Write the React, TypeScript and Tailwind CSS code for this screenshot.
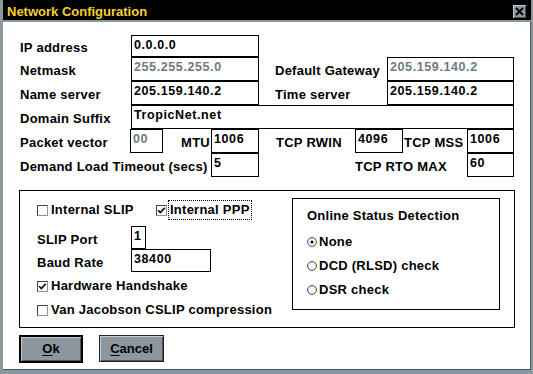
import React from 'react'

interface BoxProps {
  children?: React.ReactNode
  className?: string
  dim?: boolean
}

// Win3.x style edit field — sharp black outline, bold text pinned to the top
function Box({ children, className = '', dim = false }: BoxProps) {
  return (
    <div
      className={`shrink-0 border border-black bg-white pl-[2px] pt-[2px] text-[12.5px] leading-[15px] tracking-[0.6px] ${dim ? 'text-[#6e7a84]' : 'text-black'} ${className}`}
    >
      {children}
    </div>
  )
}

function Label({ children, className = '' }: { children: React.ReactNode; className?: string }) {
  return <span className={`shrink-0 pt-[4px] text-[13px] leading-4 tracking-[0.25px] ${className}`}>{children}</span>
}

function CheckBox({ checked = false }: { checked?: boolean }) {
  return (
    <span className="flex h-[11px] w-[11px] shrink-0 items-center justify-center border-t border-l border-[#404448] border-r-[#8c9498] border-b-[#8c9498] border-r border-b bg-white">
      {checked && (
        <svg width="9" height="9" viewBox="0 0 9 9">
          <path d="M1.2 4.2 L3.4 6.6 L7.8 1.8" fill="none" stroke="black" strokeWidth="1.6" />
        </svg>
      )}
    </span>
  )
}

function Radio({ selected = false }: { selected?: boolean }) {
  return (
    <svg width="10" height="10" viewBox="0 0 10 10" className="shrink-0">
      <circle cx="5" cy="5" r="4.4" fill="white" stroke="#404448" strokeWidth="1" />
      {selected && <circle cx="5" cy="5" r="1.6" fill="black" />}
    </svg>
  )
}

function OptionRow({ checked, children, className = '' }: { checked?: boolean; children: React.ReactNode; className?: string }) {
  return (
    <div className={`flex h-5 items-center ${className}`}>
      <CheckBox checked={checked} />
      <span className="ml-[3px] text-[13px] leading-4 tracking-[0.25px]">{children}</span>
    </div>
  )
}

export default function App() {
  return (
    <div className="flex h-[374px] w-[533px] flex-col bg-[#8c98a0] pr-[2px] pb-[4px] pl-[3px] font-['Liberation_Sans',Arial,sans-serif] font-bold text-black">
      {/* Title bar */}
      <div className="flex h-5 shrink-0 items-start justify-between bg-black">
        <span className="pt-[4px] pl-[4px] text-[13px] leading-4 text-[#f4d22c]">Network Configuration</span>
        <button
          type="button"
          className="mt-[5px] mr-[5px] flex h-[13px] w-[13px] items-center justify-center bg-[#8c969e] shadow-[inset_1px_1px_0_#c4ccd0,inset_-1px_-1px_0_#4c545c]"
        >
          <svg width="9" height="9" viewBox="0 0 9 9">
            <path d="M1 1 L8 8 M8 1 L1 8" stroke="black" strokeWidth="1.8" />
          </svg>
        </button>
      </div>

      {/* Dialog body */}
      <div className="mt-[2px] flex flex-1 flex-col border-r border-b border-[#4c545c] bg-white pt-[13px] pl-[16px]">
        <div className="flex h-[22px] items-center">
          <Label className="w-[112px] pl-[1px]">IP address</Label>
          <Box className="h-[22px] w-[128px]">0.0.0.0</Box>
        </div>
        <div className="flex h-6 items-center">
          <Label className="w-[112px] pl-[1px]">Netmask</Label>
          <Box dim className="h-6 w-[128px]">255.255.255.0</Box>
          <Label className="w-[128px] pl-[16px]">Default Gateway</Label>
          <Box dim className="h-6 w-[127px]">205.159.140.2</Box>
        </div>
        <div className="flex h-6 items-center">
          <Label className="w-[112px] pl-[1px]">Name server</Label>
          <Box className="h-6 w-[128px]">205.159.140.2</Box>
          <Label className="w-[128px] pl-[16px]">Time server</Label>
          <Box className="h-6 w-[127px]">205.159.140.2</Box>
        </div>
        <div className="flex h-6 items-center">
          <Label className="w-[112px] pl-[1px]">Domain Suffix</Label>
          <Box className="h-6 w-[383px]">TropicNet.net</Box>
        </div>
        <div className="flex h-6 items-center">
          <Label className="w-[111px] pl-[1px]">Packet vector</Label>
          <Box dim className="h-6 w-[33px]">00</Box>
          <Label className="w-[48px] pr-[1px] text-right">MTU</Label>
          <Box className="h-6 w-[48px]">1006</Box>
          <Label className="w-[96px] pl-[17px]">TCP RWIN</Label>
          <Box className="h-6 w-[48px]">4096</Box>
          <Label className="w-[64px] pl-[1px]">TCP MSS</Label>
          <Box className="h-6 w-[47px]">1006</Box>
        </div>
        <div className="flex h-6 items-center">
          <Label className="w-[192px] pl-[1px]">Demand Load Timeout (secs)</Label>
          <Box className="h-6 w-[48px]">5</Box>
          <span className="w-[96px] shrink-0" />
          <Label className="w-[112px]">TCP RTO MAX</Label>
          <Box className="h-6 w-[47px]">60</Box>
        </div>

        {/* Serial options group */}
        <div className="mt-[13px] flex h-[138px] w-[496px] border border-black">
          <div className="flex flex-1 flex-col pt-[9px] pl-[17px]">
            <div className="flex h-5 items-center">
              <div className="flex w-[119px] items-center">
                <CheckBox />
                <span className="ml-[3px] text-[13px] leading-4 tracking-[0.25px]">Internal SLIP</span>
              </div>
              <CheckBox checked />
              <span className="ml-[1px] flex h-5 items-center border border-dotted border-black px-[1px] text-[13px] leading-4 tracking-[0.25px]">
                Internal PPP
              </span>
            </div>
            <div className="mt-[6px] flex h-[23px] items-center">
              <Label className="w-[94px]">SLIP Port</Label>
              <Box className="h-[23px] w-[15px]">1</Box>
            </div>
            <div className="flex h-[23px] items-center">
              <Label className="w-[94px]">Baud Rate</Label>
              <Box className="h-[23px] w-[80px]">38400</Box>
            </div>
            <OptionRow checked className="mt-[4px]">Hardware Handshake</OptionRow>
            <OptionRow className="mt-[4px]">Van Jacobson CSLIP compression</OptionRow>
          </div>

          <div className="mt-[7px] mr-[14px] flex h-[112px] w-[208px] shrink-0 flex-col border border-black pt-[9px] pl-[14px]">
            <span className="text-[13px] leading-4 tracking-[0.25px]">Online Status Detection</span>
            <div className="mt-[6px] flex flex-col">
              {[
                { label: 'None', selected: true },
                { label: 'DCD (RLSD) check', selected: false },
                { label: 'DSR check', selected: false },
              ].map(opt => (
                <div key={opt.label} className="flex h-6 items-center">
                  <Radio selected={opt.selected} />
                  <span className="ml-[2px] text-[13px] leading-4 tracking-[0.25px]">{opt.label}</span>
                </div>
              ))}
            </div>
          </div>
        </div>

        {/* Buttons */}
        <div className="mt-[7px] flex items-start">
          <button
            type="button"
            className="flex h-[28px] w-[64px] items-center justify-center border-2 border-black bg-[#8c969e] text-[13px] shadow-[inset_1px_1px_0_#c4ccd0,inset_-1px_-1px_0_#4c545c]"
          >
            <span className="underline underline-offset-2">O</span>k
          </button>
          <button
            type="button"
            className="ml-[16px] flex h-[27px] w-[65px] items-center justify-center border border-[#202428] bg-[#8c969e] text-[13px] shadow-[inset_1px_1px_0_#c4ccd0,inset_-1px_-1px_0_#4c545c]"
          >
            <span className="underline underline-offset-2">C</span>ancel
          </button>
        </div>
      </div>
    </div>
  )
}
